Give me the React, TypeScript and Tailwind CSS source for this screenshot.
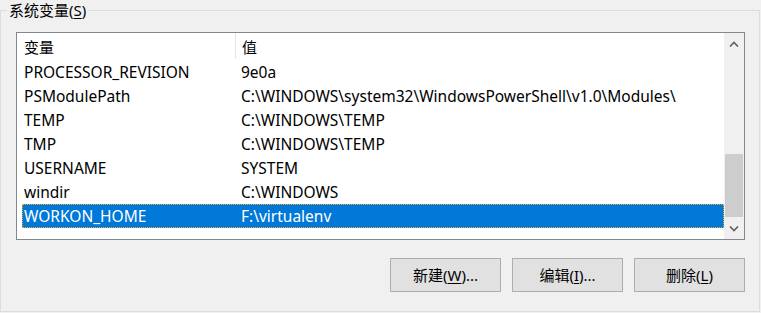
import React from "react";

const rows: [string, string][] = [
  ["PROCESSOR_REVISION", "9e0a"],
  ["PSModulePath", "C:\\WINDOWS\\system32\\WindowsPowerShell\\v1.0\\Modules\\"],
  ["TEMP", "C:\\WINDOWS\\TEMP"],
  ["TMP", "C:\\WINDOWS\\TEMP"],
  ["USERNAME", "SYSTEM"],
  ["windir", "C:\\WINDOWS"],
  ["WORKON_HOME", "F:\\virtualenv"],
];

const font = { fontFamily: '"Noto Sans", "Noto Sans CJK SC", sans-serif' };

function Btn({ label, u, tail }: { label: string; u: string; tail: string }) {
  return (
    <div className="w-[111px] h-[34px] bg-[#e1e1e1] border border-[#adadad] flex items-center justify-center text-[15px] text-black">
      <span>
        {label}(<span className="underline underline-offset-2">{u}</span>){tail}
      </span>
    </div>
  );
}

export default function App() {
  return (
    <div className="w-[761px] h-[313px] bg-[#f0f0f0] overflow-hidden" style={font}>
      <div className="relative mt-[10px] w-[760px] h-[302px] border border-[#dcdcdc] pl-[15px] pt-[21px]">
        <div className="absolute left-[6px] top-[-11px] bg-[#f0f0f0] px-[2px] text-[15px] leading-[20px] text-black">
          系统变量(<span className="underline underline-offset-2">S</span>)
        </div>
        <div className="w-[729px] h-[208px] border border-[#828790] bg-white flex">
          <div className="flex-1 flex flex-col text-[15.5px] text-black">
            <div className="h-[27px] flex items-start">
              <div className="w-[218px] pl-[7px] pt-[3px] h-[27px] text-[15px]">变量</div>
              <div className="w-px h-[26px] bg-[#e5e5e5]" />
              <div className="pl-[6px] pt-[3px] text-[15px]">值</div>
            </div>
            {rows.map(([k, v], i) => {
              const sel = i === rows.length - 1;
              return (
                <div
                  key={k}
                  className={
                    "ml-[5px] h-[24px] flex items-center pt-[2px] " +
                    (sel ? "bg-[#0078d7] text-white border border-dotted border-[#f5a623]" : "border border-transparent")
                  }
                >
                  <div className="w-[212px] pl-[1px]">{k}</div>
                  <div className="pl-[6px]">{v}</div>
                </div>
              );
            })}
          </div>
          <div className="w-[20px] bg-[#f0f0f0] flex flex-col">
            <div className="h-[21px] flex items-center justify-center">
              <svg width="10" height="6" viewBox="0 0 10 6">
                <path d="M1 5.5 L5 1.5 L9 5.5" stroke="#606060" strokeWidth="1.6" fill="none" />
              </svg>
            </div>
            <div className="flex-1 flex flex-col">
              <div className="h-[100px]" />
              <div className="h-[63px] bg-[#cdcdcd] mx-px" />
              <div className="flex-1" />
            </div>
            <div className="h-[21px] flex items-center justify-center">
              <svg width="10" height="6" viewBox="0 0 10 6">
                <path d="M1 0.5 L5 4.5 L9 0.5" stroke="#606060" strokeWidth="1.6" fill="none" />
              </svg>
            </div>
          </div>
        </div>
        <div className="mt-[18px] w-[729px] flex justify-end gap-[11px]">
          <Btn label="新建" u="W" tail="..." />
          <Btn label="编辑" u="I" tail="..." />
          <Btn label="删除" u="L" tail="" />
        </div>
      </div>
    </div>
  );
}
